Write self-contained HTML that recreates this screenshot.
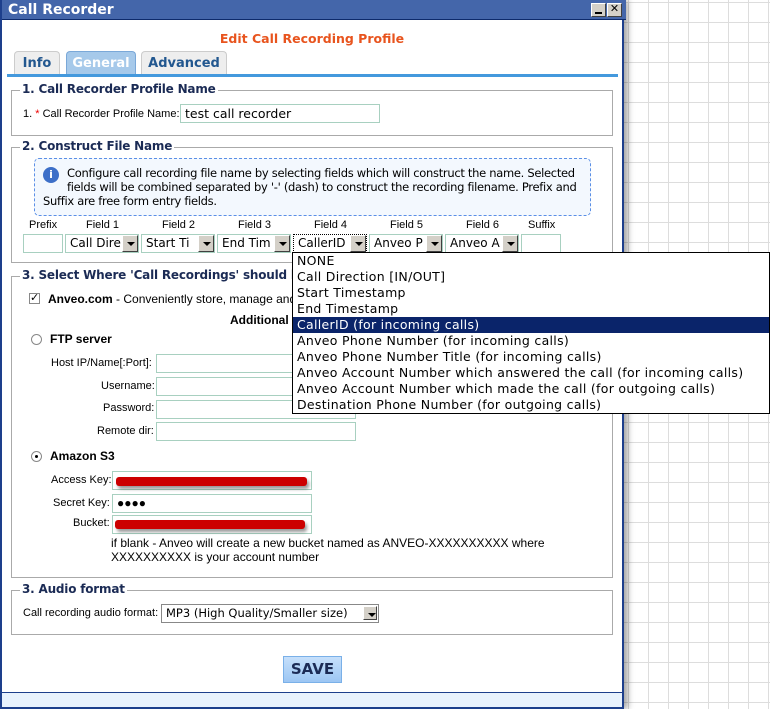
<!DOCTYPE html>
<html><head><meta charset="utf-8"><style>
*{box-sizing:border-box;margin:0;padding:0}
body{width:770px;height:709px;position:relative;overflow:hidden;font-family:"Liberation Sans","DejaVu Sans",sans-serif;font-size:11px;color:#000;
background-color:#fff;
background-image:repeating-linear-gradient(90deg,transparent 0 8px,#ddd 8px 9px,transparent 9px 20px),repeating-linear-gradient(0deg,transparent 0 6px,#ddd 6px 7px,transparent 7px 20px);}
.a{position:absolute}
.win{position:absolute;left:0;top:0;width:624px;height:709px;background:#fff;border:2px solid #1d3f8c;border-top:none;box-shadow:4px 0 6px rgba(0,0,0,.35)}
.title{position:absolute;left:0;top:0;width:624px;height:20px;background:#4466aa;border-bottom:1px solid #0d2a6b;color:#fff;font-weight:bold;font-size:14px;padding:2px 6px;font-family:"DejaVu Sans",sans-serif}
.wb{position:absolute;top:3px;width:15px;height:14px;background:#d4d0c8;border:1px solid;border-color:#fff #404040 #404040 #fff;font-size:11px;color:#000;text-align:center;line-height:11px;font-weight:bold}
.tab{position:absolute;top:51px;height:24px;border:1px solid #ccc;border-bottom:none;border-radius:4px 4px 0 0;background:#eee;color:#22578f;font-weight:bold;font-size:13px;text-align:center;line-height:23px;font-family:"DejaVu Sans",sans-serif}
.fs{position:absolute;border:1px solid #aaa}
.lg{position:absolute;background:#fff;padding:0 2px;font-weight:bold;font-size:12px;color:#1b2b55;font-family:"DejaVu Sans",sans-serif;top:-9px;left:8px;white-space:nowrap;letter-spacing:-.2px}
.in{position:absolute;border:1px solid #a8d0c0;background:#fff;height:19px}
.sel{position:absolute;height:19px;border:1px solid #a8d0c0;background:#fff;font-family:"DejaVu Sans",sans-serif;font-size:12px;padding:1px 4px;overflow:hidden;white-space:nowrap}
.sel b{position:absolute;right:0;top:0;width:16px;height:17px;background:#d4d0c8;border:1px solid;border-color:#fff #404040 #404040 #fff}
.sel b:after{content:"";position:absolute;left:4px;top:6px;border:4px solid transparent;border-top:4px solid #000;border-bottom:none}
.lb{position:absolute;font-size:11px;white-space:nowrap}
.dd{position:absolute;left:292px;top:252px;width:478px;height:162px;background:#fff;border:1px solid #000;font-family:"DejaVu Sans",sans-serif;font-size:12.5px;letter-spacing:.3px}
.dd div{height:16px;line-height:16px;padding-left:4px;white-space:nowrap}
.red{position:absolute;height:9px;background:#c00;border-radius:3px;box-shadow:2px 3px 3px rgba(0,0,0,.4)}
.rad{position:absolute;width:11px;height:11px;border-radius:50%;border:1px solid #888;background:#fff}
</style></head><body>
<div class="win">
<div class="title">Call Recorder</div>
<div class="wb" style="left:589px"><span style="position:absolute;left:3px;top:8px;width:7px;height:2px;background:#000"></span></div>
<div class="wb" style="left:605px">✕</div>
<div class="a" style="left:0;top:31px;width:620px;text-align:center;color:#e8541e;font-weight:bold;font-size:12.5px;font-family:'DejaVu Sans',sans-serif">Edit Call Recording Profile</div>
<div class="tab" style="left:12px;width:46px">Info</div>
<div class="tab" style="left:64px;width:70px;background:#a6c9ea;color:#fff;border-color:#7aa8d8">General</div>
<div class="tab" style="left:139px;width:86px">Advanced</div>
<div class="a" style="left:5px;top:74px;width:611px;height:3px;background:#4499dd"></div>

<div class="fs" style="left:9px;top:90px;width:602px;height:46px"><div class="lg">1. Call Recorder Profile Name</div></div>
<div class="lb" style="left:21px;top:108px">1. <span style="color:#e00">*</span> Call Recorder Profile Name:</div>
<div class="in" style="left:178px;top:104px;width:200px;font-size:12.5px;padding:1px 4px;font-family:'DejaVu Sans',sans-serif">test call recorder</div>

<div class="fs" style="left:9px;top:147px;width:602px;height:116px"><div class="lg">2. Construct File Name</div></div>
<div class="a" style="left:32px;top:158px;width:557px;height:58px;border:1px dashed #5b8fe6;border-radius:5px;background:#f3f8fe;font-size:11.5px;line-height:14px;padding:7px 0 0 8px;font-family:'DejaVu Sans',sans-serif;letter-spacing:-.3px;white-space:nowrap">
<span style="position:absolute;left:8px;top:8px;width:16px;height:16px;border-radius:50%;background:#3d6fc8;color:#fff;text-align:center;font-weight:bold;font-size:11px;line-height:16px;letter-spacing:0">i</span><span style="padding-left:24px">Configure call recording file name by selecting fields which will construct the name. Selected</span><br><span style="padding-left:24px">fields will be combined separated by '-' (dash) to construct the recording filename. Prefix and</span><br>Suffix are free form entry fields.</div>
<div class="lb" style="left:27px;top:219px">Prefix</div>
<div class="lb" style="left:84px;top:219px">Field 1</div>
<div class="lb" style="left:160px;top:219px">Field 2</div>
<div class="lb" style="left:236px;top:219px">Field 3</div>
<div class="lb" style="left:312px;top:219px">Field 4</div>
<div class="lb" style="left:388px;top:219px">Field 5</div>
<div class="lb" style="left:464px;top:219px">Field 6</div>
<div class="lb" style="left:526px;top:219px">Suffix</div>
<div class="in" style="left:21px;top:234px;width:40px"></div>
<div class="sel" style="left:63px;top:234px;width:74px">Call Dire<b></b></div>
<div class="sel" style="left:139px;top:234px;width:74px">Start Ti<b></b></div>
<div class="sel" style="left:215px;top:234px;width:74px">End Tim<b></b></div>
<div class="sel" style="left:291px;top:234px;width:74px;border:1px dotted #000">CallerID<b></b></div>
<div class="sel" style="left:367px;top:234px;width:74px">Anveo P<b></b></div>
<div class="sel" style="left:443px;top:234px;width:74px">Anveo A<b></b></div>
<div class="in" style="left:519px;top:234px;width:40px"></div>

<div class="fs" style="left:9px;top:276px;width:602px;height:302px"><div class="lg">3. Select Where 'Call Recordings' should be stored</div></div>
<div class="a" style="left:27px;top:293px;width:11px;height:11px;border:1px solid #888;font-size:11px;line-height:9px;text-align:center">✓</div>
<div class="lb" style="left:46px;top:292px;font-size:12px"><b>Anveo.com</b> - Conveniently store, manage and access</div>
<div class="lb" style="left:228px;top:313px;font-size:12px;font-weight:bold">Additional</div>
<div class="rad" style="left:29px;top:334px"></div>
<div class="lb" style="left:48px;top:332px;font-size:12px;font-weight:bold">FTP server</div>
<div class="lb" style="left:49px;top:357px">Host IP/Name[:Port]:</div>
<div class="in" style="left:154px;top:354px;width:200px"></div>
<div class="lb" style="left:99px;top:380px">Username:</div>
<div class="in" style="left:154px;top:377px;width:200px"></div>
<div class="lb" style="left:101px;top:402px">Password:</div>
<div class="in" style="left:154px;top:400px;width:200px"></div>
<div class="lb" style="left:95px;top:425px">Remote dir:</div>
<div class="in" style="left:154px;top:422px;width:200px"></div>
<div class="rad" style="left:29px;top:451px"><span style="position:absolute;left:3px;top:3px;width:3px;height:3px;background:#000;border-radius:50%"></span></div>
<div class="lb" style="left:48px;top:449px;font-size:12px;font-weight:bold">Amazon S3</div>
<div class="lb" style="left:49px;top:474px">Access Key:</div>
<div class="in" style="left:110px;top:471px;width:200px"></div>
<div class="red" style="left:114px;top:477px;width:191px"></div>
<div class="lb" style="left:51px;top:497px">Secret Key:</div>
<div class="in" style="left:110px;top:494px;width:200px;font-size:12px;padding-left:4px;line-height:17px">●●●●</div>
<div class="lb" style="left:71px;top:517px">Bucket:</div>
<div class="in" style="left:110px;top:515px;width:200px"></div>
<div class="red" style="left:113px;top:520px;width:190px"></div>
<div class="lb" style="left:109px;top:536px;font-size:12px;line-height:14px">if blank - Anveo will create a new bucket named as ANVEO-XXXXXXXXXX where<br>XXXXXXXXXX is your account number</div>

<div class="fs" style="left:9px;top:590px;width:602px;height:45px"><div class="lg">3. Audio format</div></div>
<div class="lb" style="left:21px;top:607px">Call recording audio format:</div>
<div class="sel" style="left:159px;top:604px;width:218px;font-size:11.5px;border-color:#888">MP3 (High Quality/Smaller size)<b style="width:14px;height:14px;top:1px;right:1px"></b></div>

<div class="a" style="left:281px;top:656px;width:59px;height:27px;background:linear-gradient(#c6e0fb,#9cc6f3);border:1px solid #7ab0e8;text-align:center;line-height:25px;font-size:15px;font-weight:bold;color:#1b2b55;font-family:'DejaVu Sans',sans-serif">SAVE</div>
<div class="a" style="left:0;top:692px;width:620px;height:15px;background:#e8f2fd;border-top:1px solid #1d3f8c"></div>
</div>

<div class="dd">
<div>NONE</div><div>Call Direction [IN/OUT]</div><div>Start Timestamp</div><div>End Timestamp</div>
<div style="background:#0a246a;color:#fff">CallerID (for incoming calls)</div>
<div>Anveo Phone Number (for incoming calls)</div><div>Anveo Phone Number Title (for incoming calls)</div>
<div>Anveo Account Number which answered the call (for incoming calls)</div>
<div>Anveo Account Number which made the call (for outgoing calls)</div>
<div>Destination Phone Number (for outgoing calls)</div>
</div>
</body></html>
